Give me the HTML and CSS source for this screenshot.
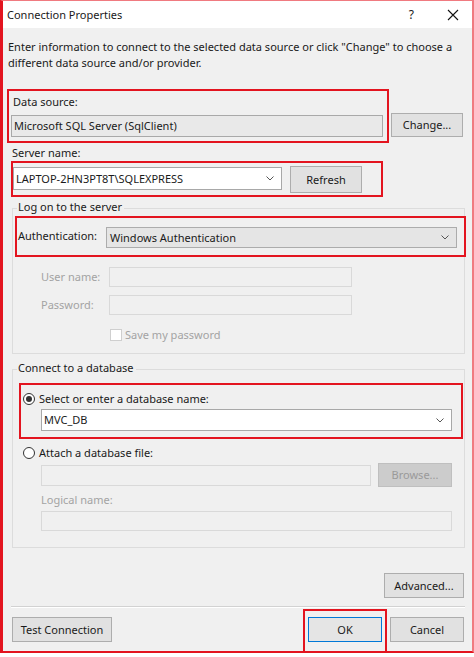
FILE: index.html
```html
<!DOCTYPE html>
<html>
<head>
<meta charset="utf-8">
<title>Connection Properties</title>
<link rel="stylesheet" href="styles.css">
</head>
<body>
<div class="window">
  <div class="titlebar">
    <span class="title">Connection Properties</span>
    <span class="tb-btns">
      <span class="help">?</span>
      <svg class="close" width="12" height="12" viewBox="0 0 12 12"><path d="M1 1 L11 11 M11 1 L1 11" stroke="#111" stroke-width="1.1" fill="none"/></svg>
    </span>
  </div>
  <div class="content">
    <p class="intro">Enter information to connect to the selected data source or click "Change" to choose a different data source and/or provider.</p>

    <div class="row-ds">
      <div class="hl hl-ds">
        <div class="lbl lbl-ds">Data source:</div>
        <div class="field field-ro">Microsoft SQL Server (SqlClient)</div>
      </div>
      <button class="btn btn-change">Change...</button>
    </div>

    <div class="lbl lbl-server">Server name:</div>
    <div class="hl hl-sv">
      <div class="combo combo-sv"><span>LAPTOP-2HN3PT8T\SQLEXPRESS</span><svg class="chev" width="8" height="5" viewBox="0 0 8 5"><path d="M0.5 0.5 L4 4 L7.5 0.5" stroke="#555" fill="none"/></svg></div>
      <button class="btn btn-refresh">Refresh</button>
    </div>

    <div class="group group-logon">
      <span class="legend">Log on to the server</span>
      <div class="hl hl-auth">
        <span class="lbl lbl-auth">Authentication:</span>
        <div class="combo combo-auth"><span>Windows Authentication</span><svg class="chev" width="8" height="5" viewBox="0 0 8 5"><path d="M0.5 0.5 L4 4 L7.5 0.5" stroke="#555" fill="none"/></svg></div>
      </div>
      <div class="cred-row cred-user">
        <span class="lbl dis cred-lbl">User name:</span>
        <div class="field field-dis cred-field"></div>
      </div>
      <div class="cred-row cred-pass">
        <span class="lbl dis cred-lbl">Password:</span>
        <div class="field field-dis cred-field"></div>
      </div>
      <div class="check-row">
        <span class="checkbox"></span>
        <span class="lbl dis">Save my password</span>
      </div>
    </div>

    <div class="group group-db">
      <span class="legend">Connect to a database</span>
      <div class="hl hl-db">
        <div class="radio-row">
          <span class="radio checked"></span>
          <span class="lbl">Select or enter a database name:</span>
        </div>
        <div class="combo combo-db"><span>MVC_DB</span><svg class="chev" width="8" height="5" viewBox="0 0 8 5"><path d="M0.5 0.5 L4 4 L7.5 0.5" stroke="#555" fill="none"/></svg></div>
      </div>
      <div class="radio-row radio-attach">
        <span class="radio"></span>
        <span class="lbl">Attach a database file:</span>
      </div>
      <div class="file-row">
        <div class="field field-dis file-field"></div>
        <button class="btn btn-dis btn-browse">Browse...</button>
      </div>
      <div class="lbl dis lbl-logical">Logical name:</div>
      <div class="field field-dis logical-field"></div>
    </div>

    <div class="adv-row">
      <button class="btn btn-adv">Advanced...</button>
    </div>
    <div class="separator"></div>
    <div class="footer">
      <button class="btn btn-test">Test Connection</button>
      <div class="ok-wrap"><button class="btn btn-ok">OK</button></div>
      <button class="btn btn-cancel">Cancel</button>
    </div>
  </div>
</div>
</body>
</html>
```

FILE: styles.css
```css
* { box-sizing: border-box; }
html, body { margin: 0; padding: 0; background: #ffffff; }
body {
  font-family: "Segoe UI", "Noto Sans", "Open Sans", sans-serif;
  font-size: 11px;
  line-height: 16px;
  color: #1a1a1a;
}
.window {
  width: 474px;
  height: 653px;
  background: #f0f0f0;
  border-left: 3px solid #e3141f;
  border-top: 1px solid #f07a80;
  border-right: 2px solid #f07a80;
  border-bottom: 2px solid #e3141f;
}
.titlebar {
  height: 27px;
  background: #ffffff;
  display: flex;
  align-items: center;
  justify-content: space-between;
  padding-left: 4px;
  padding-right: 13px;
}
.title { line-height: 16px; }
.tb-btns { display: flex; align-items: center; }
.help { margin-right: 33px; font-size: 12px; }
.close { display: block; }

.content { display: flex; flex-direction: column; align-items: flex-start; }

.intro { margin: 11px 0 0 5px; width: 458px; line-height: 16px; }

.hl { border: 2px solid #e3141f; }

.lbl { line-height: 16px; white-space: nowrap; }
.dis { color: #a3a3a3; }

.btn {
  font: inherit;
  color: #1a1a1a;
  background: #e1e1e1;
  border: 1px solid #adadad;
  padding: 0;
  margin: 0;
  line-height: 16px;
  display: flex;
  align-items: center;
  justify-content: center;
}
.btn-dis { background: #cccccc; border-color: #bfbfbf; color: #9a9a9a; }

.field { border: 1px solid #d9d9d9; background: #f0f0f0; }
.field-ro {
  background: #e9e9e9;
  border-color: #a9a9a9;
  padding-left: 2px;
  display: flex;
  align-items: center;
}

.combo {
  display: flex;
  align-items: center;
  justify-content: space-between;
  background: #ffffff;
  border: 1px solid #a8a8a8;
  padding: 0 7px 0 2px;
}
.chev { display: block; }

/* data source */
.row-ds { display: flex; align-items: flex-start; margin: 18px 0 0 4px; }
.hl-ds { width: 382px; height: 54px; padding: 3px 0 0 4px; }
.hl-ds .field-ro { width: 372px; height: 22px; margin: 5px 0 0 -2px; }
.btn-change { width: 72px; height: 24px; margin: 24px 0 0 2px; }

/* server */
.lbl-server { margin: 2px 0 0 9px; }
.hl-sv {
  display: flex;
  align-items: flex-start;
  margin-left: 8px;
  width: 372px;
  height: 36px;
}
.combo-sv { width: 269px; height: 23px; margin-top: 4px; }
.btn-refresh { width: 72px; height: 27px; margin: 3px 0 0 8px; }

/* groups */
.group {
  border: 1px solid #dcdcdc;
  margin-left: 9px;
  width: 453px;
  display: flex;
  flex-direction: column;
  align-items: flex-start;
}
.legend {
  display: inline-block;
  background: #f0f0f0;
  margin: -10px 0 0 4px;
  padding: 0 2px 0 1px;
  line-height: 16px;
}
.group-logon { margin-top: 11px; padding-bottom: 10px; }
.hl-auth {
  display: flex;
  align-items: flex-start;
  width: 451px;
  height: 41px;
  margin: 1px 0 0 2px;
  padding: 9px 0 0 1px;
}
.lbl-auth { width: 88px; margin-top: 1px; }
.combo-auth {
  width: 351px;
  height: 21px;
  background: #e5e5e5;
  border-color: #acacac;
  padding-left: 3px;
}
.cred-row { display: flex; align-items: center; margin-left: 28px; }
.cred-user { margin-top: 10px; }
.cred-pass { margin-top: 8px; }
.cred-lbl { width: 68px; }
.cred-field { width: 243px; height: 20px; }
.check-row { display: flex; align-items: center; margin: 12px 0 0 97px; }
.checkbox {
  width: 12px;
  height: 12px;
  border: 1px solid #cfcfcf;
  background: #ffffff;
  margin-right: 3px;
}

.group-db { margin-top: 15px; padding-bottom: 16px; }
.hl-db {
  width: 444px;
  height: 56px;
  margin: 7px 0 0 6px;
  padding: 6px 0 0 2px;
}
.radio-row { display: flex; align-items: center; }
.radio {
  width: 12px;
  height: 12px;
  border: 1px solid #333333;
  border-radius: 50%;
  background: #ffffff;
  margin-right: 4px;
  display: flex;
  align-items: center;
  justify-content: center;
}
.radio.checked::after {
  content: "";
  width: 6px;
  height: 6px;
  border-radius: 50%;
  background: #333333;
}
.combo-db { width: 411px; height: 22px; margin: 2px 0 0 18px; }
.radio-attach { margin: 6px 0 0 10px; }
.file-row { display: flex; align-items: flex-start; margin: 2px 0 0 28px; }
.file-field { width: 330px; height: 21px; margin-top: 2px; }
.btn-browse { width: 74px; height: 24px; margin-left: 7px; }
.lbl-logical { margin: 5px 0 0 28px; }
.logical-field { width: 411px; height: 20px; margin: 3px 0 0 28px; }

.adv-row { align-self: stretch; display: flex; justify-content: flex-end; padding-right: 8px; margin-top: 25px; }
.btn-adv { width: 80px; height: 25px; }
.separator {
  margin: 8px 0 0 8px;
  width: 454px;
  border-top: 1px solid #d2d2d2;
  border-bottom: 1px solid #ffffff;
}
.footer { align-self: stretch; display: flex; align-items: flex-start; margin: 9px 0 0 9px; }
.btn-test { width: 100px; height: 25px; }
.ok-wrap { position: relative; margin-left: 196px; }
.ok-wrap::after {
  content: "";
  position: absolute;
  left: -5px;
  top: -8px;
  right: -5px;
  bottom: -11px;
  border: 2px solid #e3141f;
  pointer-events: none;
}
.btn-ok { width: 74px; height: 25px; border: 1px solid #0078d7; background: #e5e5e5; }
.btn-cancel { width: 74px; height: 25px; margin-left: 8px; }
```
